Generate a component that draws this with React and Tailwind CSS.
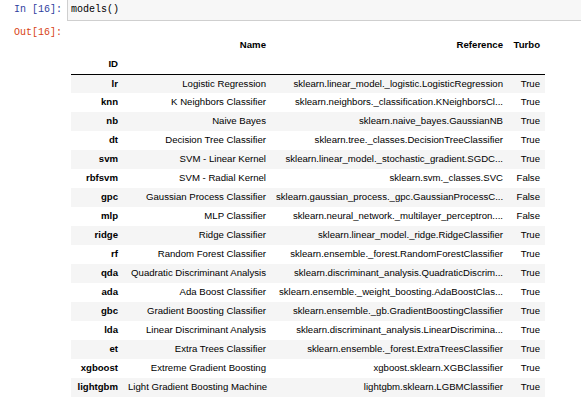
const rows = [
  ["lr", "Logistic Regression", "sklearn.linear_model._logistic.LogisticRegression", "True"],
  ["knn", "K Neighbors Classifier", "sklearn.neighbors._classification.KNeighborsCl...", "True"],
  ["nb", "Naive Bayes", "sklearn.naive_bayes.GaussianNB", "True"],
  ["dt", "Decision Tree Classifier", "sklearn.tree._classes.DecisionTreeClassifier", "True"],
  ["svm", "SVM - Linear Kernel", "sklearn.linear_model._stochastic_gradient.SGDC...", "True"],
  ["rbfsvm", "SVM - Radial Kernel", "sklearn.svm._classes.SVC", "False"],
  ["gpc", "Gaussian Process Classifier", "sklearn.gaussian_process._gpc.GaussianProcessC...", "False"],
  ["mlp", "MLP Classifier", "sklearn.neural_network._multilayer_perceptron....", "False"],
  ["ridge", "Ridge Classifier", "sklearn.linear_model._ridge.RidgeClassifier", "True"],
  ["rf", "Random Forest Classifier", "sklearn.ensemble._forest.RandomForestClassifier", "True"],
  ["qda", "Quadratic Discriminant Analysis", "sklearn.discriminant_analysis.QuadraticDiscrim...", "True"],
  ["ada", "Ada Boost Classifier", "sklearn.ensemble._weight_boosting.AdaBoostClas...", "True"],
  ["gbc", "Gradient Boosting Classifier", "sklearn.ensemble._gb.GradientBoostingClassifier", "True"],
  ["lda", "Linear Discriminant Analysis", "sklearn.discriminant_analysis.LinearDiscrimina...", "True"],
  ["et", "Extra Trees Classifier", "sklearn.ensemble._forest.ExtraTreesClassifier", "True"],
  ["xgboost", "Extreme Gradient Boosting", "xgboost.sklearn.XGBClassifier", "True"],
  ["lightgbm", "Light Gradient Boosting Machine", "lightgbm.sklearn.LGBMClassifier", "True"],
];

const mono = "font-['Liberation_Mono','DejaVu_Sans_Mono',monospace]";
const cell = "h-[19px] px-[5px] py-0 text-right align-middle whitespace-nowrap overflow-hidden";

export default function App() {
  return (
    <div className="w-[581px] h-[405px] overflow-hidden bg-white">
      {/* input cell */}
      <div className="flex">
        <div className={`w-[67px] shrink-0 pr-[5px] text-right text-[10px] leading-[20px] text-[#303f9f] ${mono}`}>
          In&nbsp;[16]:
        </div>
        <div className={`flex-1 h-[21px] border-l border-b border-[#cfcfcf] bg-[#f7f7f7] pl-[3px] text-[10px] leading-[20px] text-black ${mono}`}>
          models()
        </div>
      </div>

      {/* output cell */}
      <div className="flex">
        <div className={`w-[67px] shrink-0 pr-[5px] pt-[6px] text-right text-[10px] leading-[12px] text-[#d84315] ${mono}`}>
          Out[16]:
        </div>
        <div className="pl-[4px] pt-[13px]">
          <table className="table-fixed w-[474px] border-collapse font-['Liberation_Sans',Arial,sans-serif] text-[9.6px] text-black">
            <colgroup>
              <col className="w-[52px]" />
              <col className="w-[148px]" />
              <col className="w-[237px]" />
              <col className="w-[37px]" />
            </colgroup>
            <thead>
              <tr>
                <th className={`${cell} h-[21px] pt-[1px]`}></th>
                <th className={`${cell} h-[21px] pt-[1px] font-bold`}>Name</th>
                <th className={`${cell} h-[21px] pt-[1px] font-bold`}>Reference</th>
                <th className={`${cell} h-[21px] pt-[1px] font-bold`}>Turbo</th>
              </tr>
              <tr className="border-b border-black">
                <th className={`${cell} font-bold`}>ID</th>
                <th className={cell}></th>
                <th className={cell}></th>
                <th className={cell}></th>
              </tr>
            </thead>
            <tbody>
              {rows.map((r, i) => (
                <tr key={r[0]} className={i % 2 === 0 ? "bg-[#f5f5f5]" : "bg-white"}>
                  <th className={`${cell} font-bold`}>{r[0]}</th>
                  <td className={cell}>{r[1]}</td>
                  <td className={cell}>{r[2]}</td>
                  <td className={cell}>{r[3]}</td>
                </tr>
              ))}
            </tbody>
          </table>
        </div>
      </div>
    </div>
  );
}
